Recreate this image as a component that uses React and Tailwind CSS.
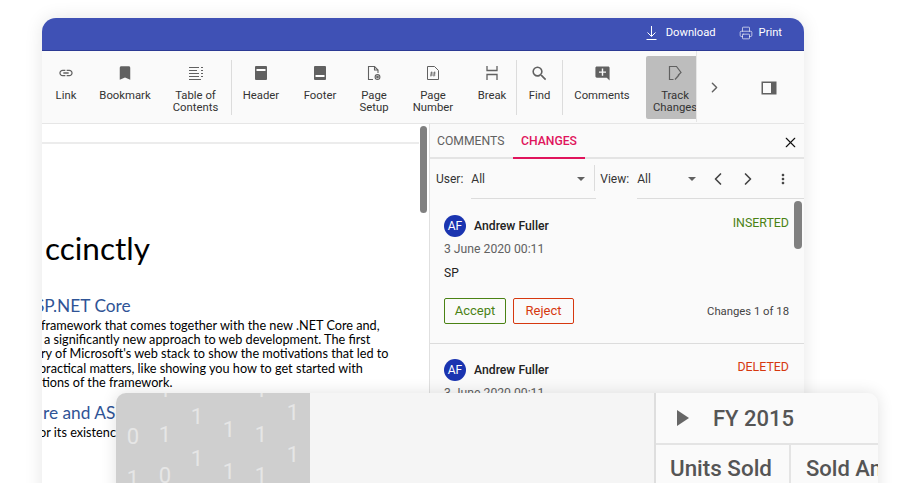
import React from 'react';
import { ChevronLeft, ChevronRight, Printer, X } from 'lucide-react';
import { MdAddComment, MdBookmark, MdLink, MdMoreVert, MdSearch } from 'react-icons/md';

const ICON = '#616161';

const TocIcon = () => (
  <svg width="16" height="16" viewBox="0 0 16 16" fill={ICON}>
    <path d="M1 2h10v1H1zM13 2h2v1h-2zM1 5h8v1H1zM13 5h2v1h-2zM1 8h10v1H1zM13 8h2v1h-2zM1 11h10v1H1zM13 11h2v1h-2zM1 14h12v1H1z" />
  </svg>
);

const HeaderIcon = () => (
  <svg width="16" height="16" viewBox="0 0 16 16">
    <rect x="2" y="1" width="12" height="14" rx="1" fill={ICON} />
    <rect x="3.500" y="4" width="9" height="2" fill="#fff" />
  </svg>
);

const FooterIcon = () => (
  <svg width="16" height="16" viewBox="0 0 16 16">
    <rect x="2" y="1" width="12" height="14" rx="1" fill={ICON} />
    <rect x="3.500" y="10" width="9" height="2" fill="#fff" />
  </svg>
);

const PageSetupIcon = () => (
  <svg width="16" height="16" viewBox="0 0 16 16" fill="none" stroke={ICON} strokeWidth="1.1">
    <path d="M7 14.500H2.500v-13h6l3.500 3.500v3" />
    <path d="M8.500 1.500V5H12" />
    <circle cx="11.500" cy="12" r="2.400" />
    <circle cx="11.500" cy="12" r="0.800" fill={ICON} />
  </svg>
);

const PageNumberIcon = () => (
  <svg width="16" height="16" viewBox="0 0 16 16" fill="none" stroke={ICON} strokeWidth="1">
    <path d="M2.500 14.500v-13h7l4 4v9z" />
    <path d="M6.700 6.500l-.8 5M9.700 6.500l-.8 5M5.300 8h5.400M5 10h5.400" strokeWidth="0.800" />
  </svg>
);

const BreakIcon = () => (
  <svg width="16" height="16" viewBox="0 0 16 16" fill="none" stroke={ICON} strokeWidth="1.300">
    <path d="M3 1v4.500h10V1M3 15V9.500h10V15" />
  </svg>
);

const TrackIcon = () => (
  <svg width="16" height="16" viewBox="0 0 16 16" fill="none" stroke={ICON} strokeWidth="1.200">
    <path d="M6.500 14.500H2.500v-13h7L14 7.500l-3 3" />
    <path d="M8 14.500l4-4.500" />
  </svg>
);

const DownloadIcon = () => (
  <svg width="13" height="14" viewBox="0 0 13 14" fill="none" stroke="#fff" strokeWidth="1">
    <path d="M6.500 0v10M2.500 6.500l4 4 4-4M1.500 13.500h10" />
  </svg>
);

const tools = [
  { label: ['Link'], icon: <MdLink size={16} color={ICON} />, w: 'w-[48px]' },
  { label: ['Bookmark'], icon: <MdBookmark size={18} color={ICON} />, w: 'w-[70px]' },
  { label: ['Table of', 'Contents'], icon: <TocIcon />, w: 'w-[71px]', sep: true },
  { label: ['Header'], icon: <HeaderIcon />, w: 'w-[58px]' },
  { label: ['Footer'], icon: <FooterIcon />, w: 'w-[60px]' },
  { label: ['Page', 'Setup'], icon: <PageSetupIcon />, w: 'w-[48px]' },
  { label: ['Page', 'Number'], icon: <PageNumberIcon />, w: 'w-[70px]' },
  { label: ['Break'], icon: <BreakIcon />, w: 'w-[48px]', sep: true },
  { label: ['Find'], icon: <MdSearch size={19} color={ICON} />, w: 'w-[45px]', sep: true },
  { label: ['Comments'], icon: <MdAddComment size={17} color={ICON} />, w: 'w-[78px]' },
];

function ToolButton({ label, icon, w }) {
  return (
    <div className={`${w} shrink-0 flex flex-col items-center pt-[14px] text-[11.300px] leading-[12px] text-[#333]`}>
      <div className="h-[16px] flex items-center justify-center">{icon}</div>
      <div className="mt-[9px] text-center whitespace-nowrap">
        {label.map((l) => (
          <div key={l}>{l}</div>
        ))}
      </div>
    </div>
  );
}

function Toolbar() {
  return (
    <div className="h-[73px] flex bg-[#fafafa] border-b border-[#e6e6e6]">
      <div className="flex items-start">
        {tools.map((t) => (
          <React.Fragment key={t.label[0] + t.label.length}>
            <ToolButton {...t} />
            {t.sep && <div className="w-px h-[55px] mt-[9px] bg-[#dcdcdc] shrink-0" />}
          </React.Fragment>
        ))}
      </div>
      <div className="w-[50px] h-[63px] mt-[5px] ml-[5px] bg-[#bdbdbd] rounded-l-[2px] overflow-hidden shrink-0">
        <div className="w-[58px] flex flex-col items-center pt-[9px] text-[11.300px] leading-[12px] text-[#333]">
          <TrackIcon />
          <div className="mt-[9px] text-center whitespace-nowrap">
            <div>Track</div>
            <div>Changes</div>
          </div>
        </div>
      </div>
      <div className="flex-1 flex items-center border-l border-[#e6e6e6] h-[71px] pt-[2px]">
        <ChevronRight size={17} color={ICON} className="ml-[9px]" />
        <svg width="16" height="14" viewBox="0 0 16 14" className="ml-[38px]">
          <rect x="0.500" y="0.500" width="15" height="13" fill={ICON} />
          <rect x="2" y="2" width="8" height="10" fill="#fafafa" />
        </svg>
      </div>
    </div>
  );
}

function DocLine({ children, className }) {
  return <div className={`whitespace-nowrap ${className}`}>{children}</div>;
}

function DocPage() {
  return (
    <div className="w-[387px] shrink-0 relative bg-white overflow-hidden font-['Lato',sans-serif]">
      <div className="h-[20px] border-b-2 border-[#ececec] mr-[10px]" />
      <DocLine className="mt-[81px] ml-[3px] text-[31.500px] leading-[46px] text-black">ccinctly</DocLine>
      <DocLine className="mt-[23px] -ml-[7px] text-[17.300px] leading-[24px] text-[#2f5496]">SP.NET Core</DocLine>
      <div className="text-[12.700px] leading-[14.200px] text-black">
        <DocLine className="-ml-[1px]">framework that comes together with the new .NET Core and,</DocLine>
        <DocLine className="ml-[2px]">a significantly new approach to web development. The first</DocLine>
        <DocLine className="-ml-[1px]">ry of Microsoft's web stack to show the motivations that led to</DocLine>
        <DocLine className="-ml-[3px]">practical matters, like showing you how to get started with</DocLine>
        <DocLine className="ml-[0px]">tions of the framework.</DocLine>
      </div>
      <DocLine className="mt-[12px] ml-[1px] text-[17.300px] leading-[24px] text-[#2f5496]">re and AS</DocLine>
      <DocLine className="-ml-[3px] text-[12.700px] leading-[14.200px] text-black">or its existenc</DocLine>
      <div className="absolute right-[2px] top-[2px] w-[7px] h-[87px] rounded-full bg-[#808080]" />
    </div>
  );
}

function Author({ status, statusColor }) {
  return (
    <div className="flex items-center">
      <div className="w-[22px] h-[22px] rounded-full bg-[#1a34b0] text-white text-[12px] flex items-center justify-center shrink-0">AF</div>
      <span className="ml-[8px] text-[12.200px] font-medium text-[#222]">Andrew Fuller</span>
      <span className={`ml-auto mr-[1px] -mt-[5px] text-[12.400px] ${statusColor}`}>{status}</span>
    </div>
  );
}

function ChangesPanel() {
  return (
    <div className="flex-1 min-w-0 relative border-l border-[#e0e0e0] bg-[#fafafa] font-['Roboto',sans-serif]">
      <div className="h-[35px] flex items-stretch border-b-2 border-[#e4e4e4] pl-[7px] text-[12.200px]">
        <div className="w-[76px] flex items-center pt-[1px] text-[#616161]">COMMENTS</div>
        <div className="w-[72px] h-[35px] pt-[1px] flex items-center justify-center font-medium text-[#e0145c] border-b-2 border-[#e0145c]">CHANGES</div>
        <X size={17} color="#111" className="ml-auto mr-[5px] mt-[10px]" strokeWidth={1.6} />
      </div>
      <div className="h-[40px] flex items-center text-[12px] text-[#333]">
        <span className="ml-[6px] mb-[1px]">User:</span>
        <div className="ml-[8px] -mr-[2px] w-[125px] h-full flex items-center justify-between border-b border-[#dcdcdc] pr-[11px]">
          <span className="pt-[1px]">All</span>
          <span className="w-0 h-0 border-x-[4px] border-x-transparent border-t-[4px] border-t-[#616161]" />
        </div>
        <div className="relative w-px h-[26px] bg-[#dcdcdc] mb-[2px]" />
        <span className="ml-[5px] mb-[1px]">View:</span>
        <div className="ml-[8px] flex-1 h-full flex items-center border-b border-[#dcdcdc]">
          <span className="pt-[1px] w-[51px]">All</span>
          <span className="w-0 h-0 border-x-[4px] border-x-transparent border-t-[4px] border-t-[#616161]" />
          <ChevronLeft size={20} color="#444" className="ml-[12px]" />
          <ChevronRight size={20} color="#444" className="ml-[10px]" />
          <MdMoreVert size={16} color="#444" className="ml-[17px]" />
        </div>
      </div>
      <div className="px-[14px] pt-[16px] h-[145px] border-b border-[#dcdcdc]">
        <Author status="INSERTED" statusColor="text-[#4a8214]" />
        <div className="mt-[4px] text-[12.200px] leading-[16px] text-[#616161]">3 June 2020 00:11</div>
        <div className="mt-[8px] text-[12px] leading-[16px] text-[#222]">SP</div>
        <div className="mt-[17px] flex items-center text-[13px]">
          <button className="w-[62px] h-[26px] border border-[#4a8214] rounded-[2px] text-[#4a8214]">Accept</button>
          <button className="ml-[7px] w-[61px] h-[26px] border border-[#d6380f] rounded-[2px] text-[#d6380f]">Reject</button>
          <span className="ml-auto mr-[1px] mt-[3px] text-[11.300px] text-[#444]">Changes 1 of 18</span>
        </div>
      </div>
      <div className="px-[14px] pt-[15px]">
        <Author status="DELETED" statusColor="text-[#d6380f]" />
        <div className="mt-[4px] text-[12.200px] leading-[16px] text-[#616161]">3 June 2020 00:11</div>
      </div>
      <div className="absolute right-[2px] top-[77px] w-[8px] h-[48px] rounded-full bg-[#808080]" />
    </div>
  );
}

// columns of the binary backdrop, the top digit of some is cut by the card edge
const digitCols = [
  { offset: 'mt-[23px]', digits: ['0', '1'] },
  { offset: '-mt-[24px]', digits: ['1', '1', '0'], gap: 'mb-[3px]' },
  { offset: 'mt-[3px]', digits: ['1', '1', '1'] },
  { offset: 'mt-[16px]', digits: ['1', '1'] },
  { offset: '-mt-[24px]', digits: ['1', '1', '1'], gap: 'mb-[3px]' },
  { offset: '-mt-[1px]', digits: ['1', '1', '1'] },
];

function BinaryPanel() {
  return (
    <div className="w-[194px] shrink-0 bg-[#cfcfcf] flex pl-[1px] overflow-hidden">
      {digitCols.map((c, i) => (
        <div key={i} className={`w-[32px] flex flex-col items-center text-[22px] leading-[41.500px] text-[#e6e6e6] font-['Roboto',sans-serif] ${c.offset}`}>
          {c.digits.map((d, j) => (
            <span key={j} className={j === 0 ? c.gap : undefined}>{d}</span>
          ))}
        </div>
      ))}
    </div>
  );
}

function PivotCard() {
  return (
    <div className="absolute left-[116px] top-[393px] w-[762px] h-[110px] flex rounded-t-[10px] overflow-hidden bg-[#f5f5f5] shadow-[0_0_16px_rgba(0,0,0,0.12)] font-['Roboto',sans-serif]">
      <BinaryPanel />
      <div className="flex-1 bg-[#f5f5f5]" />
      <div className="w-[224px] shrink-0 border-l-2 border-[#dedede] bg-[#fafafa] text-[22px] font-medium text-[#555] overflow-hidden">
        <div className="h-[52px] flex items-center border-b-2 border-[#e4e4e4]">
          <span className="ml-[21px] w-0 h-0 border-y-[8px] border-y-transparent border-l-[12px] border-l-[#666]" />
          <span className="ml-[24px]">FY 2015</span>
        </div>
        <div className="flex h-[50px]">
          <div className="w-[135px] shrink-0 border-r-2 border-[#e4e4e4] flex items-center pl-[14px] pb-[3px] text-[22.400px] whitespace-nowrap">Units Sold</div>
          <div className="pl-[15px] pt-[7px] whitespace-nowrap">Sold Amount</div>
        </div>
      </div>
    </div>
  );
}

export default function App() {
  return (
    <div className="relative w-[920px] h-[483px] overflow-hidden bg-white font-['Roboto',sans-serif]">
      <div className="ml-[42px] mt-[18px] w-[762px] h-[500px] rounded-[14px] flex flex-col overflow-hidden shadow-[0_0_18px_rgba(0,0,0,0.10)]">
        <div className="h-[33px] shrink-0 bg-[#3f51b5] border-b border-[#2c3a94] flex items-center justify-end pb-[2px] text-[11.200px] text-white">
          <DownloadIcon />
          <span className="ml-[8px]">Download</span>
          <Printer size={14} strokeWidth={1.1} className="ml-[23px]" />
          <span className="ml-[6px] mr-[22px]">Print</span>
        </div>
        <Toolbar />
        <div className="flex-1 flex min-h-0">
          <DocPage />
          <ChangesPanel />
        </div>
      </div>
      <PivotCard />
    </div>
  );
}
